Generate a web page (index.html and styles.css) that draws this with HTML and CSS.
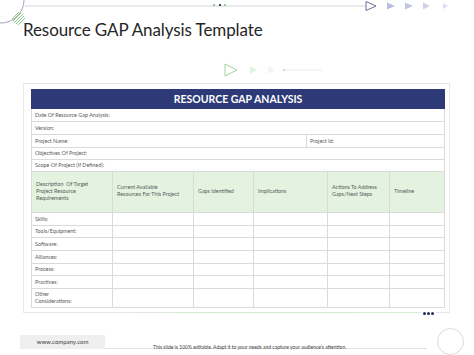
FILE: index.html
```html
<!DOCTYPE html>
<html>
<head>
<meta charset="utf-8">
<link rel="stylesheet" href="styles.css">
</head>
<body>
<div class="slide">
  <svg class="arc" width="40" height="40" viewBox="0 0 40 40">
    <circle cx="1" cy="0" r="23" fill="none" stroke="#8a8fa8" stroke-width="0.8"/>
    <g stroke="#7cc576" stroke-width="0.9">
      <line x1="12" y1="19" x2="19" y2="12"/>
      <line x1="13" y1="21" x2="21" y2="13"/>
      <line x1="14" y1="23" x2="23" y2="14"/>
      <line x1="16" y1="24" x2="24" y2="16"/>
      <line x1="18" y1="25" x2="25" y2="18"/>
    </g>
  </svg>
  <svg class="topdeco" width="474" height="14" viewBox="0 0 474 14">
    <line x1="25" y1="6" x2="366" y2="6" stroke="#d4d6de" stroke-width="1"/>
    <circle cx="214" cy="5" r="1.1" fill="#7cc576"/>
    <circle cx="220" cy="5" r="1.1" fill="#222"/>
    <circle cx="225" cy="5" r="1.1" fill="#7cc576"/>
    <path d="M366 1.5 L376 6 L366 10.5 Z" fill="none" stroke="#5b6290" stroke-width="0.9"/>
    <path d="M387 2.5 L395 6 L387 9.5 Z" fill="#b9bde0"/>
    <path d="M405 2.5 L413 6 L405 9.5 Z" fill="#c3c7e6"/>
    <path d="M423 2.5 L430 6 L423 9.5 Z" fill="#cfd2ec"/>
    <path d="M443 3 L448 6 L443 9 Z" fill="#dcdef2"/>
  </svg>
  <h1 class="title">Resource GAP Analysis Template</h1>
  <svg class="middeco" width="474" height="16" viewBox="0 0 474 16">
    <path d="M225 2 L237 8 L225 14 Z" fill="none" stroke="#9ed49a" stroke-width="1"/>
    <path d="M250 4 L257 8 L250 12 Z" fill="#e3f3e1"/>
    <path d="M268 4 L275 8 L268 12 Z" fill="#edf7ec"/>
    <circle cx="284" cy="8" r="1" fill="#cfcfcf"/>
    <line x1="285" y1="8" x2="322" y2="8" stroke="#e6e6e6" stroke-width="0.8"/>
  </svg>
  <div class="frame">
    <table class="gap">
      <colgroup>
        <col style="width:81px"><col style="width:81px"><col style="width:60px"><col style="width:74px"><col style="width:62px"><col style="width:55px">
      </colgroup>
      <tr class="r-head"><td colspan="6" class="navy">RESOURCE GAP ANALYSIS</td></tr>
      <tr class="r13"><td colspan="6">Date Of Resource Gap Analysis:</td></tr>
      <tr class="r13"><td colspan="6">Version:</td></tr>
      <tr class="r13"><td colspan="6" class="split"><div class="split-row"><span class="split-left">Project Name:</span><span class="split-right">Project Id:</span></div></td></tr>
      <tr class="r12"><td colspan="6">Objectives Of Project:</td></tr>
      <tr class="r12"><td colspan="6">Scope Of Project (If Defined):</td></tr>
      <tr class="r-green">
        <td>Description &nbsp;Of Target<br>Project Resource<br>Requirements</td>
        <td>Current Available<br>Resources For This Project</td>
        <td>Gaps Identified</td>
        <td>Implications</td>
        <td>Actions To Address<br>Gaps/Next Steps</td>
        <td>Timeline</td>
      </tr>
      <tr class="r13"><td>Skills:</td><td></td><td></td><td></td><td></td><td></td></tr>
      <tr class="r12"><td>Tools/Equipment:</td><td></td><td></td><td></td><td></td><td></td></tr>
      <tr class="r13"><td>Software:</td><td></td><td></td><td></td><td></td><td></td></tr>
      <tr class="r13"><td>Alliances:</td><td></td><td></td><td></td><td></td><td></td></tr>
      <tr class="r12"><td>Process:</td><td></td><td></td><td></td><td></td><td></td></tr>
      <tr class="r13"><td>Practices:</td><td></td><td></td><td></td><td></td><td></td></tr>
      <tr class="r-last"><td>Other<br>Considerations:</td><td></td><td></td><td></td><td></td><td></td></tr>
    </table>
    <div class="greenline"></div>
    <div class="dots"><span></span><span></span><span></span></div>
  </div>
  <div class="footer">
    <div class="url">www.company.com</div>
    <div class="footline">
      <span class="note">This slide is 100% editable. Adapt it to your needs and capture your audience’s attention.</span>
    </div>
    <div class="ring"></div>
  </div>
</div>
</body>
</html>
```
FILE: styles.css
```css
html, body {
  margin: 0;
  padding: 0;
  background: #fff;
}
.slide {
  position: relative;
  width: 474px;
  height: 355px;
  overflow: hidden;
  font-family: "Lato", "Open Sans", sans-serif;
}
.arc {
  position: absolute;
  left: 0;
  top: 0;
}
.topdeco, .middeco {
  display: block;
}
.title {
  margin: 6px 0 0 23px;
  font-weight: 400;
  font-size: 17px;
  line-height: 20px;
  color: #262626;
  letter-spacing: -0.1px;
}
.middeco {
  margin-top: 22px;
}
.frame {
  position: relative;
  margin: 5px 0 0 23px;
  width: 427px;
  height: 230px;
  border: 1px solid #e8e8e8;
  box-sizing: border-box;
  padding: 5px 0 0 7px;
}
.gap {
  border-collapse: collapse;
  table-layout: fixed;
  width: 413px;
}
.gap td {
  border: 1px solid #dadada;
  padding: 0 0 0 3px;
  font-size: 5.4px;
  line-height: 7px;
  color: #5a5a5a;
  vertical-align: middle;
  box-sizing: border-box;
}
.gap td.split {
  padding: 0;
}
.split-row {
  display: flex;
  height: 12px;
  align-items: stretch;
}
.split-left {
  width: 275px;
  padding-left: 3px;
  box-sizing: border-box;
  border-right: 1px solid #dadada;
  display: flex;
  align-items: center;
}
.split-right {
  flex: 1;
  padding-left: 3px;
  display: flex;
  align-items: center;
}
.r-head td {
  height: 19px;
}
.gap td.navy {
  background: #2d3a77;
  border-color: #2d3a77;
  color: #fff;
  font-weight: 700;
  font-size: 10.5px;
  text-align: center;
  padding: 0;
}
.r13 td { height: 13px; }
.r12 td { height: 12px; }
.r-green td {
  height: 41px;
  background: #e3f3e0;
  padding-left: 4px;
  padding-bottom: 2px;
}
.r-last td { height: 19px; }
.greenline {
  position: absolute;
  left: 97px;
  right: 30px;
  bottom: -1px;
  height: 1px;
  background: linear-gradient(90deg, rgba(200,232,196,0), #cfe9cb 30%, #d6edd2 100%);
}
.dots {
  position: absolute;
  right: 13px;
  bottom: -3px;
  display: flex;
  gap: 1.2px;
  padding: 0 2px;
  background: #fff;
}
.dots span {
  width: 3px;
  height: 3px;
  border-radius: 50%;
  background: #262b55;
}
.footer {
  position: relative;
  display: flex;
  align-items: flex-end;
  margin-top: 20px;
  height: 16px;
}
.url {
  margin-left: 20px;
  width: 85px;
  height: 14px;
  background: #efefef;
  font-size: 6px;
  line-height: 14px;
  text-align: center;
  color: #444;
}
.footline {
  position: relative;
  width: 322px;
  border-bottom: 1px solid #e2e2e2;
  height: 0;
}
.note {
  position: absolute;
  left: 48px;
  top: -4px;
  font-size: 5px;
  line-height: 6px;
  white-space: nowrap;
  color: #444;
}
.ring {
  position: absolute;
  left: 437px;
  top: -5px;
  width: 25px;
  height: 25px;
  border: 1px solid #d9d9d9;
  border-radius: 50%;
  background: #fff;
}
```
